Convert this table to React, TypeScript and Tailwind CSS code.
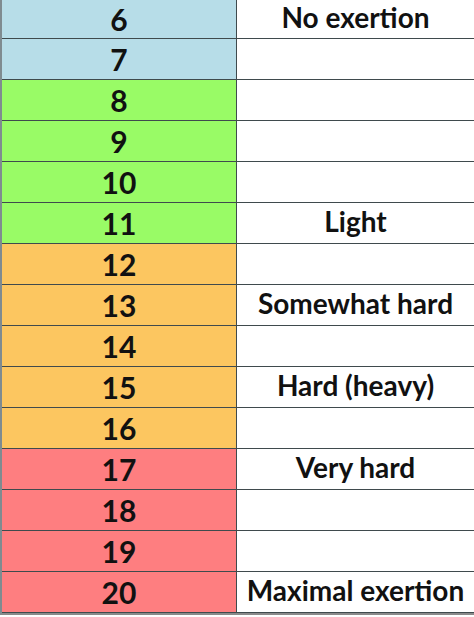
const rows: { n: number; label: string; color: string }[] = [
  { n: 6, label: "No exertion", color: "bg-[#b7dde8]" },
  { n: 7, label: "", color: "bg-[#b7dde8]" },
  { n: 8, label: "", color: "bg-[#99fb66]" },
  { n: 9, label: "", color: "bg-[#99fb66]" },
  { n: 10, label: "", color: "bg-[#99fb66]" },
  { n: 11, label: "Light", color: "bg-[#99fb66]" },
  { n: 12, label: "", color: "bg-[#fcc660]" },
  { n: 13, label: "Somewhat hard", color: "bg-[#fcc660]" },
  { n: 14, label: "", color: "bg-[#fcc660]" },
  { n: 15, label: "Hard (heavy)", color: "bg-[#fcc660]" },
  { n: 16, label: "", color: "bg-[#fcc660]" },
  { n: 17, label: "Very hard", color: "bg-[#fe7e80]" },
  { n: 18, label: "", color: "bg-[#fe7e80]" },
  { n: 19, label: "", color: "bg-[#fe7e80]" },
  { n: 20, label: "Maximal exertion", color: "bg-[#fe7e80]" },
];

export default function App() {
  return (
    <div className="w-[474px] h-[617px] bg-white overflow-hidden font-['Lato',sans-serif] font-bold text-[#111]">
      <div className="flex flex-col border-l-2 border-l-[#7f8b90] border-b-2 border-b-[#8a8a8a]">
        {rows.map((r, i) => (
          <div
            key={r.n}
            className={`flex border-b border-[#3f4a4d] ${i === 0 ? "h-[39px]" : "h-[41px]"}`}
          >
            <div
              className={`${r.color} w-[235px] border-r border-[#3f4a4d] flex items-center justify-center text-[30px] leading-none`}
            >
              {r.n}
            </div>
            <div className="flex-1 flex items-center justify-center pb-[4px] text-[28px] leading-none">
              {r.label}
            </div>
          </div>
        ))}
      </div>
    </div>
  );
}
